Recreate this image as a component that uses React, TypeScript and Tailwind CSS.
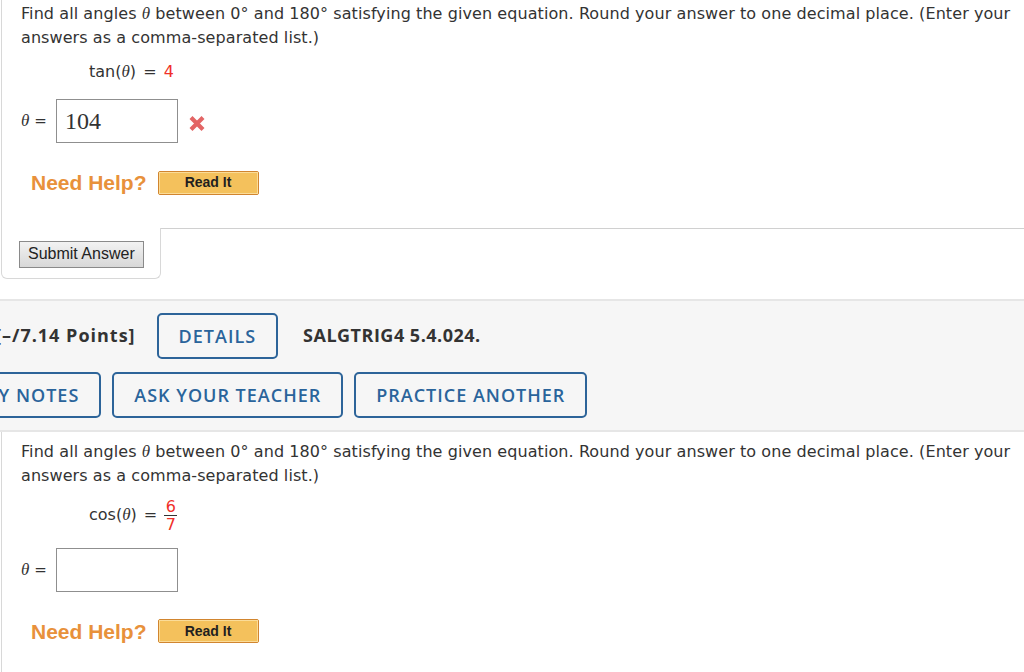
import React from "react";

const verdana = "font-['DejaVu_Sans',Verdana,sans-serif]";
const openSans = "font-['Open_Sans',sans-serif]";
const arial = "font-['Liberation_Sans',Arial,sans-serif]";

function Theta() {
  return <span className="font-['Liberation_Serif',serif] italic text-[17px]">θ</span>;
}

function Equals() {
  return <span className="mx-[2px]"> = </span>;
}

function QuestionText() {
  return (
    <p className={`${verdana} text-[16px] leading-[24px] tracking-[0.08px] text-[#333]`}>
      Find all angles <Theta /> between 0° and 180° satisfying the given equation. Round your answer to one decimal place. (Enter your
      <br />
      answers as a comma-separated list.)
    </p>
  );
}

function ReadIt() {
  return (
    <button className="h-[24px] w-[101px] rounded-[2px] border border-[#d1852f] bg-[#f4c15c] p-0">
      <span className={`flex h-full w-full items-center justify-center border border-[#fbdc98] ${arial} text-[14px] font-bold text-[#1f1f1f]`}>
        Read It
      </span>
    </button>
  );
}

function NeedHelp() {
  return (
    <div className="ml-[10px] mt-[24px] flex items-center gap-[11px]">
      <span className={`${arial} text-[21px] font-bold text-[#e8913b]`}>Need Help?</span>
      <ReadIt />
    </div>
  );
}

function WrongMark() {
  return (
    <svg width="18" height="17" viewBox="0 0 18 17" className="ml-[10px] mt-[4px]">
      <path d="M3 2.5 L15 14.5 M15 2.5 L3 14.5" stroke="#e36565" strokeWidth="4.2" />
    </svg>
  );
}

function AnswerRow({ value, wrong }: { value?: string; wrong?: boolean }) {
  return (
    <div className="mt-[15px] flex items-center">
      <span className={`${verdana} w-[35px] text-[15px] text-[#333]`}>
        <Theta /> =
      </span>
      <div className="flex h-[44px] w-[122px] items-center border border-[#8f8f8f] bg-white pl-[8px]">
        <span className="font-['Liberation_Serif',serif] text-[24px] text-[#333]">{value}</span>
      </div>
      {wrong && <WrongMark />}
    </div>
  );
}

function Fraction() {
  return (
    <span className="inline-flex flex-col items-center align-middle text-[#f0302a]">
      <span className="leading-[17px]">6</span>
      <span className="h-px w-[13px] bg-[#333]" />
      <span className="leading-[17px]">7</span>
    </span>
  );
}

function HeaderButton({ children, className = "" }: { children: React.ReactNode; className?: string }) {
  return (
    <button
      className={`rounded-[5px] border-2 border-[#2d6499] bg-transparent px-[20px] py-[9px] ${openSans} text-[18px] font-semibold leading-[24px] tracking-[1px] text-[#2a649b] ${className}`}
    >
      {children}
    </button>
  );
}

export default function App() {
  return (
    <div className="h-[672px] w-[1024px] overflow-hidden bg-white">
      {/* first question (scrolled slightly off the top) */}
      <div className="-mt-[5px]">
        <div className="ml-[1px] border-l border-[#d8d8d8] pl-[19px] pt-[7px] pb-[29px]">
          <QuestionText />
          <div className={`${verdana} ml-[68px] mt-[10px] text-[16px] leading-[24px] text-[#333]`}>
            tan(<Theta />)<Equals /><span className="text-[#f0302a]">4</span>
          </div>
          <AnswerRow value="104" wrong />
          <NeedHelp />
        </div>
        <div className="flex">
          <div className="ml-[1px] w-[160px] rounded-b-[6px] border-x border-b border-[#d8d8d8] pb-[10px] pl-[17px] pt-[13px]">
            <button
              className={`h-[27px] border border-[#8a8a8a] bg-gradient-to-b from-[#f2f2f2] to-[#d8d8d8] px-[8px] ${arial} text-[16px] leading-[18px] text-[#222]`}
            >
              Submit Answer
            </button>
          </div>
          <div className="flex-1 border-t border-[#d0d0d0]" />
        </div>
      </div>

      {/* header of next question */}
      <div className="mt-[20px] border-y-2 border-[#e6e6e6] bg-[#f6f6f6] pb-[12px] pt-[12px]">
        <div className="-ml-[5px] flex items-center">
          <span className={`${openSans} text-[18px] font-bold tracking-[1px] text-[#333]`}>[–/7.14 Points]</span>
          <HeaderButton className="ml-[21px]">DETAILS</HeaderButton>
          <span className={`${openSans} ml-[25px] text-[18px] font-bold tracking-[0.5px] text-[#333]`}>SALGTRIG4 5.4.024.</span>
        </div>
        <div className="-ml-[41px] mt-[13px] flex items-center gap-[11px]">
          <HeaderButton>MY NOTES</HeaderButton>
          <HeaderButton>ASK YOUR TEACHER</HeaderButton>
          <HeaderButton>PRACTICE ANOTHER</HeaderButton>
        </div>
      </div>

      {/* second question */}
      <div className="ml-[1px] h-[400px] border-l border-[#d8d8d8] pl-[19px] pt-[8px]">
        <QuestionText />
        <div className={`${verdana} ml-[68px] mt-[10px] text-[16px] leading-[24px] text-[#333]`}>
          cos(<Theta />)<Equals /><Fraction />
        </div>
        <AnswerRow />
        <NeedHelp />
      </div>
    </div>
  );
}
